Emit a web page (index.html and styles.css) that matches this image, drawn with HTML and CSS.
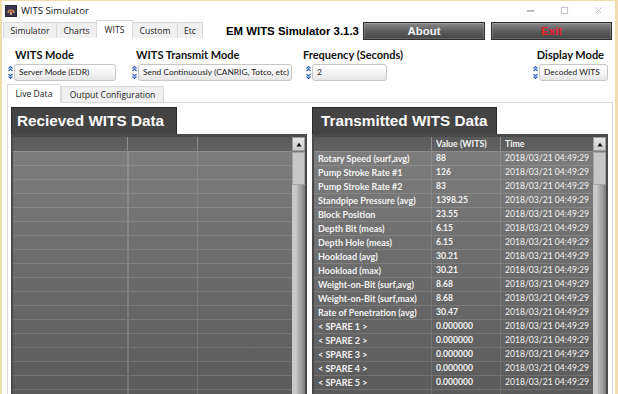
FILE: index.html
```html
<!DOCTYPE html>
<html>
<head>
<meta charset="utf-8">
<title>WITS Simulator</title>
<link rel="stylesheet" href="styles.css">
</head>
<body>
<div class="window">
  <div class="titlebar">
    <svg class="app-icon" viewBox="0 0 12 12">
      <rect x="0" y="0" width="12" height="12" fill="#23233a"/>
      <rect x="1" y="1" width="10" height="10" fill="#3a3550"/>
      <path d="M3 8 A3 3 0 0 1 9 8" fill="none" stroke="#e9a54a" stroke-width="1.2"/>
      <path d="M4.5 8 A1.5 1.5 0 0 1 7.5 8" fill="none" stroke="#d94a4a" stroke-width="1"/>
      <rect x="5.3" y="7" width="1.4" height="3" fill="#f0d080"/>
    </svg>
    <span class="title">WITS Simulator</span>
    <div class="controls">
      <span class="ctl"><svg viewBox="0 0 10 10" class="ctl-ico"><line x1="1" y1="5.5" x2="9" y2="5.5" stroke="#6e6e6e" stroke-width="1"/></svg></span>
      <span class="ctl"><svg viewBox="0 0 10 10" class="ctl-ico"><rect x="1.5" y="1.5" width="7" height="7" fill="none" stroke="#bdbdbd" stroke-width="1"/></svg></span>
      <span class="ctl"><svg viewBox="0 0 10 10" class="ctl-ico"><path d="M1.5 1.5 L8.5 8.5 M8.5 1.5 L1.5 8.5" stroke="#bdbdbd" stroke-width="1"/></svg></span>
    </div>
  </div>

  <div class="toprow">
    <div class="tabs">
      <div class="tab t-sim">Simulator</div>
      <div class="tab t-charts">Charts</div>
      <div class="tab t-wits active">WITS</div>
      <div class="tab t-custom">Custom</div>
      <div class="tab t-etc">Etc</div>
    </div>
    <div class="heading">EM WITS Simulator 3.1.3</div>
    <button class="btn about">About</button>
    <button class="btn exit">Exit</button>
  </div>

  <div class="settings">
    <div class="field f1">
      <div class="label">WITS Mode</div>
      <div class="spin">
        <svg class="arrows" viewBox="0 0 7 17"><path d="M1.5 4.5 L3.5 2.5 L5.5 4.5 M1.5 7 L3.5 5 L5.5 7 M1.5 10 L3.5 12 L5.5 10 M1.5 12.5 L3.5 14.5 L5.5 12.5" fill="none" stroke="#2f62b8" stroke-width="1.1"/></svg>
        <div class="box b1">Server Mode (EDR)</div>
      </div>
    </div>
    <div class="field f2">
      <div class="label">WITS Transmit Mode</div>
      <div class="spin">
        <svg class="arrows" viewBox="0 0 7 17"><path d="M1.5 4.5 L3.5 2.5 L5.5 4.5 M1.5 7 L3.5 5 L5.5 7 M1.5 10 L3.5 12 L5.5 10 M1.5 12.5 L3.5 14.5 L5.5 12.5" fill="none" stroke="#2f62b8" stroke-width="1.1"/></svg>
        <div class="box b2">Send Continuously (CANRIG, Totco, etc)</div>
      </div>
    </div>
    <div class="field f3">
      <div class="label">Frequency (Seconds)</div>
      <div class="spin">
        <svg class="arrows" viewBox="0 0 7 17"><path d="M1.5 4.5 L3.5 2.5 L5.5 4.5 M1.5 7 L3.5 5 L5.5 7 M1.5 10 L3.5 12 L5.5 10 M1.5 12.5 L3.5 14.5 L5.5 12.5" fill="none" stroke="#2f62b8" stroke-width="1.1"/></svg>
        <div class="box b3">2</div>
      </div>
    </div>
    <div class="field f4">
      <div class="label">Display Mode</div>
      <div class="spin">
        <svg class="arrows" viewBox="0 0 7 17"><path d="M1.5 4.5 L3.5 2.5 L5.5 4.5 M1.5 7 L3.5 5 L5.5 7 M1.5 10 L3.5 12 L5.5 10 M1.5 12.5 L3.5 14.5 L5.5 12.5" fill="none" stroke="#2f62b8" stroke-width="1.1"/></svg>
        <div class="box b4">Decoded WITS</div>
      </div>
    </div>
  </div>

  <div class="subtabs">
    <div class="subtab live active">Live Data</div>
    <div class="subtab out">Output Configuration</div>
  </div>

  <div class="panel">
    <div class="half">
      <div class="hdr hdr-l">Recieved WITS Data</div>
      <div class="grid">
        <div class="cols left">
          <div class="ghead"><span></span><span class="sep"></span><span class="sep"></span></div>
          <div class="row"><span></span><span class="c2"></span><span class="c3"></span></div>
          <div class="row"><span></span><span class="c2"></span><span class="c3"></span></div>
          <div class="row"><span></span><span class="c2"></span><span class="c3"></span></div>
          <div class="row"><span></span><span class="c2"></span><span class="c3"></span></div>
          <div class="row"><span></span><span class="c2"></span><span class="c3"></span></div>
          <div class="row"><span></span><span class="c2"></span><span class="c3"></span></div>
          <div class="row"><span></span><span class="c2"></span><span class="c3"></span></div>
          <div class="row"><span></span><span class="c2"></span><span class="c3"></span></div>
          <div class="row"><span></span><span class="c2"></span><span class="c3"></span></div>
          <div class="row"><span></span><span class="c2"></span><span class="c3"></span></div>
          <div class="row"><span></span><span class="c2"></span><span class="c3"></span></div>
          <div class="row"><span></span><span class="c2"></span><span class="c3"></span></div>
          <div class="row"><span></span><span class="c2"></span><span class="c3"></span></div>
          <div class="row"><span></span><span class="c2"></span><span class="c3"></span></div>
          <div class="row"><span></span><span class="c2"></span><span class="c3"></span></div>
          <div class="row"><span></span><span class="c2"></span><span class="c3"></span></div>
          <div class="row"><span></span><span class="c2"></span><span class="c3"></span></div>
          <div class="row"><span></span><span class="c2"></span><span class="c3"></span></div>
          <div class="row"><span></span><span class="c2"></span><span class="c3"></span></div>
        </div>
        <div class="scroll">
          <div class="sb-btn"><svg viewBox="0 0 8 6" class="sb-tri"><path d="M0.5 5.5 L4 0.5 L7.5 5.5 Z" fill="#111"/></svg></div>
          <div class="sb-thumb"></div>
          <div class="sb-track"></div>
        </div>
      </div>
    </div>

    <div class="half">
      <div class="hdr hdr-r">Transmitted WITS Data</div>
      <div class="grid">
        <div class="cols right">
          <div class="ghead"><span></span><span class="sep">Value (WITS)</span><span class="sep">Time</span></div>
          <div class="row"><span class="c1">Rotary Speed (surf,avg)</span><span class="c2">88</span><span class="c3">2018/03/21 04:49:29</span></div>
          <div class="row"><span class="c1">Pump Stroke Rate #1</span><span class="c2">126</span><span class="c3">2018/03/21 04:49:29</span></div>
          <div class="row"><span class="c1">Pump Stroke Rate #2</span><span class="c2">83</span><span class="c3">2018/03/21 04:49:29</span></div>
          <div class="row"><span class="c1">Standpipe Pressure (avg)</span><span class="c2">1398.25</span><span class="c3">2018/03/21 04:49:29</span></div>
          <div class="row"><span class="c1">Block Position</span><span class="c2">23.55</span><span class="c3">2018/03/21 04:49:29</span></div>
          <div class="row"><span class="c1">Depth Bit (meas)</span><span class="c2">6.15</span><span class="c3">2018/03/21 04:49:29</span></div>
          <div class="row"><span class="c1">Depth Hole (meas)</span><span class="c2">6.15</span><span class="c3">2018/03/21 04:49:29</span></div>
          <div class="row"><span class="c1">Hookload (avg)</span><span class="c2">30.21</span><span class="c3">2018/03/21 04:49:29</span></div>
          <div class="row"><span class="c1">Hookload (max)</span><span class="c2">30.21</span><span class="c3">2018/03/21 04:49:29</span></div>
          <div class="row"><span class="c1">Weight-on-Bit (surf,avg)</span><span class="c2">8.68</span><span class="c3">2018/03/21 04:49:29</span></div>
          <div class="row"><span class="c1">Weight-on-Bit (surf,max)</span><span class="c2">8.68</span><span class="c3">2018/03/21 04:49:29</span></div>
          <div class="row"><span class="c1">Rate of Penetration (avg)</span><span class="c2">30.47</span><span class="c3">2018/03/21 04:49:29</span></div>
          <div class="row"><span class="c1">&lt; SPARE 1 &gt;</span><span class="c2">0.000000</span><span class="c3">2018/03/21 04:49:29</span></div>
          <div class="row"><span class="c1">&lt; SPARE 2 &gt;</span><span class="c2">0.000000</span><span class="c3">2018/03/21 04:49:29</span></div>
          <div class="row"><span class="c1">&lt; SPARE 3 &gt;</span><span class="c2">0.000000</span><span class="c3">2018/03/21 04:49:29</span></div>
          <div class="row"><span class="c1">&lt; SPARE 4 &gt;</span><span class="c2">0.000000</span><span class="c3">2018/03/21 04:49:29</span></div>
          <div class="row"><span class="c1">&lt; SPARE 5 &gt;</span><span class="c2">0.000000</span><span class="c3">2018/03/21 04:49:29</span></div>
          <div class="row"><span class="c1"></span><span class="c2"></span><span class="c3"></span></div>
        </div>
        <div class="scroll">
          <div class="sb-btn"><svg viewBox="0 0 8 6" class="sb-tri"><path d="M0.5 5.5 L4 0.5 L7.5 5.5 Z" fill="#111"/></svg></div>
          <div class="sb-thumb"></div>
          <div class="sb-track"></div>
        </div>
      </div>
    </div>
  </div>
</div>
</body>
</html>
```

FILE: styles.css
```css
* { box-sizing: border-box; margin: 0; padding: 0; }

html, body {
  width: 618px;
  height: 394px;
  overflow: hidden;
  background: #ffffff;
}

body {
  font-family: Lato, "Open Sans", sans-serif;
  color: #000;
}

.window {
  width: 618px;
  height: 394px;
  border-top: 1px solid #f1dcae;
  border-left: 2px solid #f1dcae;
  border-right: 3px solid #f1dcae;
  display: flex;
  flex-direction: column;
  overflow: hidden;
}

/* title bar */
.titlebar {
  height: 19px;
  flex: none;
  display: flex;
  align-items: center;
  padding-left: 3px;
}
.app-icon { width: 12px; height: 12px; margin-right: 4px; flex: none; }
.title {
  font-family: "Open Sans", sans-serif;
  font-size: 9.6px;
  color: #111;
}
.controls { margin-left: auto; display: flex; }
.ctl {
  width: 34px;
  height: 19px;
  display: flex;
  align-items: center;
  justify-content: center;
}
.ctl-ico { width: 9px; height: 9px; }

/* top row */
.toprow {
  height: 20px;
  flex: none;
  display: flex;
  align-items: flex-start;
}
.tabs {
  display: flex;
  align-items: flex-end;
  height: 18px;
  margin-left: 1px;
}
.tab {
  height: 16px;
  background: #f0f0f0;
  border: 1px solid #d9d9d9;
  border-bottom: none;
  margin-right: -1px;
  font-family: "Open Sans", sans-serif;
  font-size: 8.6px;
  color: #222;
  display: flex;
  align-items: center;
  justify-content: center;
}
.tab.active {
  height: 18px;
  background: #ffffff;
  position: relative;
  z-index: 1;
}
.t-sim { width: 54px; }
.t-charts { width: 41px; }
.t-wits { width: 37px; }
.t-custom { width: 46px; }
.t-etc { width: 26px; }

.heading {
  width: 137px;
  margin-left: 24px;
  font-family: "Liberation Sans", Arial, sans-serif;
  font-weight: bold;
  font-size: 11.4px;
  line-height: 22px;
  white-space: nowrap;
}
.btn {
  height: 18px;
  margin-top: 2px;
  width: 122px;
  border: 1px solid #2d2d2d;
  background: linear-gradient(#8a8a8a, #5e5e5e 50%, #444444);
  box-shadow: inset 0 0 0 1px rgba(255,255,255,0.18);
  font-family: "Liberation Sans", Arial, sans-serif;
  font-weight: bold;
  font-size: 11.4px;
  color: #f4f4f4;
}
.btn.exit {
  margin-left: 6px;
  width: 121px;
  color: #e8202b;
}

/* settings row */
.settings {
  height: 44px;
  flex: none;
  display: flex;
  padding-left: 5px;
  padding-top: 8px;
}
.field { display: flex; flex-direction: column; }
.f1 { width: 124px; }
.f2 { width: 174px; }
.f3 { flex: 1; }
.f4 { width: 76px; margin-right: 7px; }
.label {
  font-family: Lato, sans-serif;
  font-weight: bold;
  font-size: 11px;
  line-height: 14px;
  color: #111;
  white-space: nowrap;
}
.f1 .label { padding-left: 8px; }
.f2 .label { padding-left: 5px; }
.f3 .label { margin-left: -2px; }
.f4 .label { text-align: right; padding-right: 4px; }
.spin {
  display: flex;
  margin-top: 2px;
  height: 17px;
}
.arrows { width: 7px; height: 17px; flex: none; }
.box {
  height: 17px;
  border: 1px solid #c6c6c6;
  border-radius: 3px;
  background: linear-gradient(#ffffff, #f2f2f2 60%, #e6e6e6);
  font-size: 8.4px;
  line-height: 15px;
  padding-left: 4px;
  color: #222;
  white-space: nowrap;
  overflow: hidden;
}
.b1 { width: 102px; }
.b2 { width: 154px; }
.b3 { width: 75px; }
.b4 { width: 69px; }

/* sub tabs */
.subtabs {
  height: 18px;
  flex: none;
  display: flex;
  align-items: flex-end;
  margin-left: 5px;
  position: relative;
  z-index: 2;
}
.subtab {
  border: 1px solid #d9d9d9;
  border-bottom: none;
  font-family: "Open Sans", sans-serif;
  font-size: 8.6px;
  color: #222;
  display: flex;
  align-items: center;
  justify-content: center;
}
.subtab.live {
  width: 54px;
  height: 19px;
  margin-bottom: -1px;
  background: #fff;
}
.subtab.out {
  width: 103px;
  height: 16px;
  background: #f0f0f0;
}

/* panel */
.panel {
  flex: 1;
  margin-left: 5px;
  width: 606px;
  border: 1px solid #d9d9d9;
  border-bottom: none;
  padding: 4px 4px 0 3px;
  display: flex;
  gap: 5px;
  min-height: 0;
}
.half {
  width: 296px;
  display: flex;
  flex-direction: column;
}
.hdr {
  height: 27px;
  flex: none;
  background: #444444;
  border: 1px solid #2a2a2a;
  border-bottom: none;
  color: #fafafa;
  font-family: "Liberation Sans", Arial, sans-serif;
  font-weight: bold;
  font-size: 15.3px;
  line-height: 26px;
  padding-left: 5px;
  white-space: nowrap;
}
.hdr-l { width: 166px; }
.hdr-r { width: 185px; padding-left: 8px; }

.grid {
  flex: 1;
  display: flex;
  border: 2px solid #4a4a4a;
  border-top: 3px solid #4a4a4a;
  border-bottom: none;
  background: linear-gradient(#7f7f7f, #6c6c6c 50%, #5b5b5b);
  min-height: 0;
  overflow: hidden;
}
.cols { flex: 1; display: flex; flex-direction: column; }
.ghead {
  height: 14px;
  flex: none;
  display: grid;
  background: linear-gradient(#5a5a5a, #626262);
  font-size: 8.8px;
  line-height: 14px;
  color: #f2f2f2;
  font-weight: bold;
}
.ghead .sep { border-left: 1px solid #8c8c8c; padding-left: 4px; }
.left .ghead, .left .row { grid-template-columns: 114px 70px 1fr; }
.right .ghead, .right .row { grid-template-columns: 117px 69px 1fr; }

.row {
  height: 14px;
  flex: none;
  display: grid;
  border-top: 1px solid rgba(255,255,255,0.13);
  font-size: 8.6px;
  line-height: 13px;
  color: #f3f3f3;
  white-space: nowrap;
}
.row span { padding-left: 4px; overflow: hidden; }
.row .c1 { font-weight: bold; font-size: 9px; }
.row .c2 { font-weight: bold; border-left: 1px solid rgba(255,255,255,0.12); }
.row .c3 { border-left: 1px solid rgba(255,255,255,0.12); }
.left .row .c2 { border-left: 2px solid rgba(255,255,255,0.16); }

.scroll {
  width: 13px;
  flex: none;
  display: flex;
  flex-direction: column;
}
.sb-btn {
  height: 14px;
  flex: none;
  background: linear-gradient(#e4e4e4, #cdcdcd);
  border: 1px solid #9c9c9c;
  display: flex;
  align-items: center;
  justify-content: center;
}
.sb-tri { width: 6px; height: 5px; }
.sb-thumb {
  height: 33px;
  flex: none;
  margin-top: 1px;
  background: #c7c7c7;
  border: 1px solid #a3a3a3;
}
.sb-track {
  flex: 1;
  background: linear-gradient(to right, #c9c9c9 0, #c9c9c9 30%, #b4b4b4 45%, #9a9a9a 75%, #7a7a7a 100%);
}
```
